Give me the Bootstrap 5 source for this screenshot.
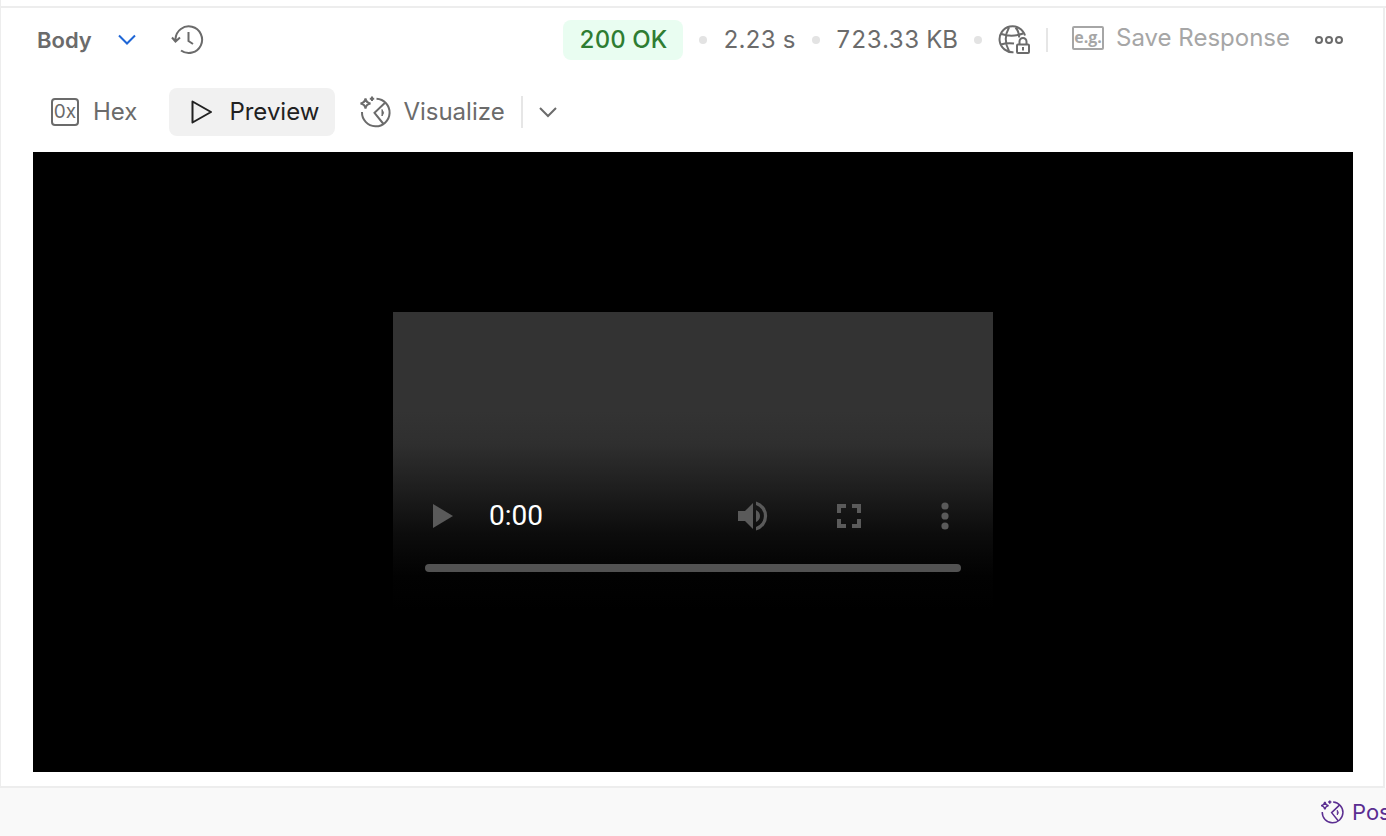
<!DOCTYPE html>
<html lang="en">
<head>
<meta charset="utf-8">
<meta name="viewport" content="width=device-width, initial-scale=1">
<title>Response preview</title>
<link rel="stylesheet" href="https://cdn.jsdelivr.net/npm/bootstrap@5.3.0/dist/css/bootstrap.min.css">
<style>
  body { font-family: Inter, sans-serif; font-size: 24px; line-height: 32px; color: #6b6b6b; }
  svg { display: block; flex: none; fill: none; stroke: currentColor; stroke-width: 2; }
  .plain { border: 0; background: none; padding: 0; color: inherit; display: flex; align-items: center; white-space: nowrap; }
  .topgap { height: 8px; border-bottom: 2px solid #ededed; border-left: 1px solid #ededed; }
  .panel { border: solid #ededed; border-width: 0 2px 2px 1px; margin-right: 1px; padding: 0 30px 14px 32px; }
  .meta-bar { height: 64px; padding-left: 4px; }
  .body-menu { font-size: 22px; font-weight: 600; gap: 26px; }
  .body-menu svg { color: #1f66d6; }
  .history { margin-left: 35px; }
  .meta { gap: 16px; font-variant-numeric: tabular-nums; }
  .status { background: #e9fdf1; color: #2e7d32; font-weight: 500; border-radius: 8px; padding: 4px 16px; }
  .dot { width: 8px; height: 8px; border-radius: 50%; background: #e3e3e3; }
  .rule { width: 2px; height: 24px; background: #e6e6e6; }
  .rule.tall { height: 32px; }
  .save { color: #a6a6a6; gap: 12px; margin: 0 9px 4px 8px; }
  .eg { width: 32px; height: 24px; border: 2px solid; border-radius: 2px; font: 700 16px/18px "Open Sans", sans-serif; display: flex; justify-content: center; }
  .views { height: 80px; }
  .view { height: 48px; padding: 0 16px; border-radius: 8px; gap: 12px; }
  .view.active { background: #f1f1f1; color: #212121; }
  .hex { width: 28px; height: 28px; margin: 0 2px; border: 2px solid; border-radius: 4px; font-size: 19px; line-height: 24px; display: flex; justify-content: center; }
  .stage { background: #000; min-height: 340px; }
  .player { width: 600px; max-width: 100%; height: 300px; color: #5a5a5a;
    background: linear-gradient(#333 33%, #2f2f2f 44%, #1e1e1e 59%, #0c0c0c 74%, #020202 88%, #000); }
  .controls { height: 64px; margin-bottom: 16px; }
  .ctl { width: 96px; height: 64px; justify-content: center; }
  .ctl svg { fill: currentColor; stroke: none; }
  .time { color: #fff; font: 28px/32px Roboto, sans-serif; }
  .track { appearance: none; height: 8px; border-radius: 4px; background: #525252; margin: 0 32px 40px; }
  .track::-webkit-slider-thumb { appearance: none; width: 0; height: 0; }
  .foot { height: 48px; background: #f9f9f9; }
  .bot { width: 66px; gap: 8px; overflow: hidden; color: #5b2e91; font-size: 22px; }
</style>
</head>
<body>
<svg width="0" height="0" class="position-absolute" aria-hidden="true">
  <symbol id="bot" viewBox="0 0 32 32">
    <path d="M3 16A13.800 13.800 0 1 0 17.500 2.700"/>
    <path d="M26.300 6.500L15.500 16.800 24.500 28"/>
    <path d="M23 13.500Q26 16.800 23 20Z" fill="currentColor" stroke-width="1"/>
    <path d="M6.500 2.500Q7.200 6.800 11.500 7.500 7.200 8.200 6.500 12.500 5.800 8.200 1.500 7.500 5.800 6.800 6.500 2.500Z"/>
    <path d="M13 .5V5M10.800 2.700H15.200"/>
  </symbol>
</svg>
<div class="min-vh-100 d-flex flex-column overflow-hidden">
  <div class="topgap"></div>
  <main class="panel flex-grow-1 d-flex flex-column">
    <div class="meta-bar d-flex align-items-center">
      <button class="plain body-menu" type="button">Body
        <svg width="18" height="12" viewBox="0 0 18 12"><path d="M1 1.500L9 9.500 17 1.500"/></svg>
      </button>
      <button class="plain history" type="button" aria-label="Response history">
        <svg width="33" height="32" viewBox="0 0 33 32"><path d="M4.500 17.500V15A13.300 13.300 0 1 1 10 26.500M1 13.500L4.500 17.500 9 13.500M17.500 8V17L22 20"/></svg>
      </button>
      <div class="meta d-flex align-items-center ms-auto text-nowrap">
        <span class="status">200 OK</span><span class="dot"></span>
        <span>2.23 s</span><span class="dot"></span>
        <span>723.33 KB</span><span class="dot"></span>
        <button class="plain" type="button" aria-label="Network">
          <svg width="32" height="30" viewBox="0 0 32 30"><path d="M27 10.500A13 13 0 1 0 15.500 27.200M11 2.500Q4.500 14 11 26M17.500 2.500Q21 6 21.200 12.500M3.500 9Q14 12.500 25 8.500M3 19.500Q9 17.500 16 18.500"/><rect x="19" y="19.500" width="12" height="8.500" rx="1"/><path d="M21.500 19V16.500a3.500 3.500 0 0 1 7 0V19M25 22V25.500"/></svg>
        </button>
        <span class="rule"></span>
        <button class="plain save" type="button"><span class="eg">e.g.</span>Save Response</button>
        <button class="plain" type="button" aria-label="More actions">
          <svg width="38" height="10" viewBox="0 0 38 10"><circle cx="4" cy="5" r="3"/><circle cx="14" cy="5" r="3"/><circle cx="24" cy="5" r="3"/></svg>
        </button>
      </div>
    </div>
    <div class="views d-flex align-items-center">
      <button class="plain view" type="button"><span class="hex">0x</span><span>Hex</span></button>
      <button class="plain view active ms-3" type="button">
        <svg width="32" height="32" viewBox="0 0 32 32"><path d="M7.500 5.500L26 16 7.500 26.500Z" stroke-linejoin="round"/></svg><span>Preview</span></button>
      <button class="plain view ms-2" type="button">
        <svg width="32" height="32"><use href="#bot"/></svg><span>Visualize</span></button>
      <span class="rule tall"></span>
      <button class="plain ms-3" type="button" aria-label="More views">
        <svg width="18" height="12" viewBox="0 0 18 12"><path d="M1 2L9 10 17 2"/></svg></button>
    </div>
    <section class="stage flex-grow-1 d-flex align-items-center justify-content-center" aria-label="Preview">
      <div class="player d-flex flex-column justify-content-end">
        <div class="controls d-flex align-items-center">
          <button class="plain ctl" type="button" aria-label="Play"><svg width="32" height="32" viewBox="0 0 32 32"><path d="M8 4L28 16 8 28Z"/></svg></button>
          <span class="time me-auto">0:00</span>
          <button class="plain ctl" type="button" aria-label="Mute"><svg width="32" height="32" viewBox="0 0 32 32"><path d="M1 11H8L16 3V29L8 21H1ZM19 10Q23 12 23 16T19 22ZM19 1.500A15 15 0 0 1 19 30.500V27A11.600 11.600 0 0 0 19 5Z"/></svg></button>
          <button class="plain ctl" type="button" aria-label="Full screen"><svg width="32" height="32" viewBox="0 0 32 32"><path d="M4 4H13V8H8V13H4ZM19 4H28V13H24V8H19ZM4 19H8V24H13V28H4ZM24 19H28V28H19V24H24Z"/></svg></button>
          <button class="plain ctl" type="button" aria-label="More options"><svg width="32" height="32" viewBox="0 0 32 32"><circle cx="16" cy="6" r="3.600"/><circle cx="16" cy="16" r="3.600"/><circle cx="16" cy="26" r="3.600"/></svg></button>
        </div>
        <input class="track" type="range" value="0" aria-label="Position">
      </div>
    </section>
  </main>
  <footer class="foot d-flex justify-content-end">
    <button class="plain bot" type="button"><svg width="24" height="24"><use href="#bot"/></svg>Postbot</button>
  </footer>
</div>
<script src="https://cdn.jsdelivr.net/npm/bootstrap@5.3.0/dist/js/bootstrap.bundle.min.js"></script>
</body>
</html>
